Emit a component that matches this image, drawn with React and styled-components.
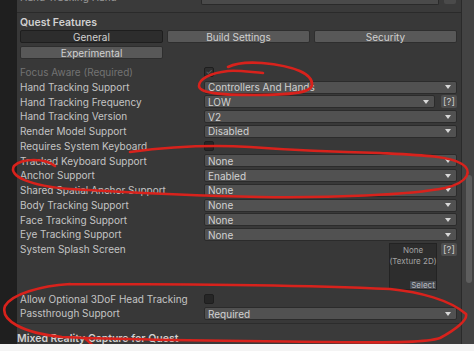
import React from 'react';
import styled, { createGlobalStyle } from 'styled-components';

const GlobalStyle = createGlobalStyle`
  *, *::before, *::after {
    box-sizing: border-box;
  }
  html, body {
    margin: 0;
    padding: 0;
    background: #f4f4f4;
  }
  body {
    font-family: Inter, "Noto Sans", "Liberation Sans", sans-serif;
    font-size: 10px;
  }
`;

const rows = [
  { label: 'Focus Aware (Required)', type: 'check', checked: true, disabled: true },
  { label: 'Hand Tracking Support', type: 'select', value: 'Controllers And Hands' },
  { label: 'Hand Tracking Frequency', type: 'select', value: 'LOW', help: true },
  { label: 'Hand Tracking Version', type: 'select', value: 'V2' },
  { label: 'Render Model Support', type: 'select', value: 'Disabled' },
  { label: 'Requires System Keyboard', type: 'check' },
  { label: 'Tracked Keyboard Support', type: 'select', value: 'None' },
  { label: 'Anchor Support', type: 'select', value: 'Enabled' },
  { label: 'Shared Spatial Anchor Support', type: 'select', value: 'None' },
  { label: 'Body Tracking Support', type: 'select', value: 'None' },
  { label: 'Face Tracking Support', type: 'select', value: 'None' },
  { label: 'Eye Tracking Support', type: 'select', value: 'None' },
  { label: 'System Splash Screen', type: 'texture' },
  { label: 'Allow Optional 3DoF Head Tracking', type: 'check' },
  { label: 'Passthrough Support', type: 'select', value: 'Required' }
];

const Field = ({ row }) => {
  if (row.type === 'check') {
    return (
      <Cell>
        <CheckBox $disabled={row.disabled}>{row.checked ? '✓' : ''}</CheckBox>
      </Cell>
    );
  }
  if (row.type === 'texture') {
    return (
      <TextureCell>
        <TextureBox>
          <TextureText>None<br />(Texture 2D)</TextureText>
          <SelectButton>Select</SelectButton>
        </TextureBox>
        <HelpButton>[?]</HelpButton>
      </TextureCell>
    );
  }
  return (
    <Cell>
      <Dropdown>
        <span>{row.value}</span>
        <Arrow />
      </Dropdown>
      {row.help && <HelpButton>[?]</HelpButton>}
    </Cell>
  );
};

const App = () => {
  return (
    <>
      <GlobalStyle />
      <Window>
        <Gutter />
        <Panel>
          <TopStrip>
            <TopLabel>Hand Tracking Hand</TopLabel>
            <TopField />
            <TopHelp />
          </TopStrip>
          <Header>Quest Features</Header>
          <Tabs>
            <Tab $active>General</Tab>
            <Tab>Build Settings</Tab>
            <Tab>Security</Tab>
            <Tab>Experimental</Tab>
          </Tabs>
          <Rows>
            {rows.map((row) => (
              <Row key={row.label} $tall={row.type === 'texture'}>
                <Label $disabled={row.disabled}>{row.label}</Label>
                <Field row={row} />
              </Row>
            ))}
          </Rows>
          <SectionTitle>Mixed Reality Capture for Quest</SectionTitle>
        </Panel>
        <Scrollbar>
          <Thumb />
        </Scrollbar>
        <Ink viewBox="0 0 474 351" width="474" height="351">
          <path d="M263,73 C250,72 238,70 228,71 C210,73 199,79 199,86 C199,93 220,95 255,95 C290,95 311,93 312,85 C313,74 295,66 262,63 C248,62 236,63 228,67" />
          <path d="M55,166 C45,158 22,158 14,166 C8,176 30,186 70,189 C120,192 200,196 260,197 C330,198 410,195 445,188 C470,182 472,170 462,164 C450,156 420,155 380,153 C330,152 290,150 250,147 C200,144 160,148 130,152" />
          <path d="M70,284 C40,286 12,294 5,306 C0,320 22,333 62,337 C120,340 250,341 330,342 C400,343 428,342 440,338 C455,330 468,320 466,314 C450,300 420,292 390,289 C300,285 150,284 70,284 M84,338 C90,342 94,346 97,351" />
        </Ink>
      </Window>
    </>
  );
};

const Window = styled.div`
  position: relative;
  width: 474px;
  height: 344px;
  display: flex;
  overflow: hidden;
  background: #383838;
`;

const Gutter = styled.div`
  width: 17px;
  flex-shrink: 0;
  background: #1f1f1f;
`;

const Panel = styled.div`
  flex: 1;
  display: flex;
  flex-direction: column;
  padding: 0 4px 0 3px;
  background: #383838;
  color: #c4c4c4;
`;

const TopStrip = styled.div`
  height: 13px;
  flex-shrink: 0;
  display: flex;
  align-items: flex-start;
  border-bottom: 1px solid #2a2a2a;
  margin: 0 -4px 0 -3px;
  padding: 0 5px 0 3px;
  background: #3a3a3a;
  overflow: hidden;
`;

const TopLabel = styled.div`
  width: 181px;
  height: 3px;
  color: #9a9a9a;
  line-height: 12px;
  white-space: nowrap;
  overflow: hidden;
  display: flex;
  align-items: flex-end;
`;

const TopField = styled.div`
  width: 238px;
  height: 5px;
  background: #4a4a4a;
  border: 1px solid #2a2a2a;
  border-top: none;
  border-radius: 0 0 2px 2px;
`;

const TopHelp = styled.div`
  width: 12px;
  height: 4px;
  margin-left: 5px;
  background: #4a4a4a;
  border-radius: 0 0 2px 2px;
`;

const Header = styled.div`
  height: 17px;
  flex-shrink: 0;
  display: flex;
  align-items: center;
  padding-top: 1px;
  font-weight: 600;
  font-size: 10.5px;
  color: #d0d0d0;
`;

const Tabs = styled.div`
  display: grid;
  grid-template-columns: repeat(3, 1fr);
  column-gap: 4px;
  row-gap: 3px;
  margin-bottom: 6px;
`;

const Tab = styled.div`
  height: 13px;
  display: flex;
  align-items: center;
  justify-content: center;
  border-radius: 2px;
  border: 1px solid ${(p) => (p.$active ? '#1e1e1e' : '#2e2e2e')};
  background: ${(p) => (p.$active ? '#2d2d2d' : '#585858')};
  color: ${(p) => (p.$active ? '#d2d2d2' : '#d0d0d0')};
  font-size: 10px;
`;

const Rows = styled.div`
  display: flex;
  flex-direction: column;
`;

const Row = styled.div`
  height: ${(p) => (p.$tall ? '49.5px' : '14.75px')};
  flex-shrink: 0;
  display: grid;
  grid-template-columns: 184px 1fr;
  align-items: ${(p) => (p.$tall ? 'start' : 'center')};
`;

const Label = styled.div`
  white-space: nowrap;
  color: ${(p) => (p.$disabled ? '#737373' : '#c4c4c4')};
  line-height: 14.75px;
`;

const Cell = styled.div`
  display: flex;
  align-items: center;
  gap: 6px;
`;

const TextureCell = styled.div`
  display: flex;
  justify-content: flex-end;
  align-items: flex-start;
  gap: 3px;
  padding-top: 1px;
`;

const CheckBox = styled.div`
  width: 10px;
  height: 10px;
  border-radius: 2px;
  border: 1px solid #1e1e1e;
  background: ${(p) => (p.$disabled ? '#2f2f2f' : '#262626')};
  color: #6a6a6a;
  font-size: 8px;
  line-height: 8px;
  text-align: center;
`;

const Dropdown = styled.div`
  flex: 1;
  height: 13px;
  display: flex;
  align-items: center;
  justify-content: space-between;
  padding: 0 5px 0 3px;
  border-radius: 2px;
  border: 1px solid #2b2b2b;
  background: #515151;
  color: #d2d2d2;
  font-size: 10px;
  white-space: nowrap;
`;

const Arrow = styled.span`
  width: 0;
  height: 0;
  border-left: 3px solid transparent;
  border-right: 3px solid transparent;
  border-top: 4px solid #d8d8d8;
`;

const HelpButton = styled.div`
  width: 16px;
  height: 13px;
  display: flex;
  align-items: center;
  justify-content: center;
  border-radius: 2px;
  background: #4e4e4e;
  color: #cfcfcf;
  font-size: 9.5px;
`;

const TextureBox = styled.div`
  width: 48px;
  height: 47px;
  display: flex;
  flex-direction: column;
  justify-content: space-between;
  align-items: center;
  border: 1px solid #232323;
  background: #2d2d2d;
  margin-right: 1px;
`;

const TextureText = styled.div`
  padding-top: 1px;
  text-align: center;
  font-size: 8px;
  line-height: 11px;
  white-space: nowrap;
  color: #a4a4a4;
`;

const SelectButton = styled.div`
  align-self: flex-end;
  width: 26px;
  height: 8px;
  display: flex;
  align-items: center;
  justify-content: center;
  background: #474a4f;
  color: #b8bcc2;
  font-size: 8px;
`;

const SectionTitle = styled.div`
  margin: 2px -4px 0 -3px;
  padding: 9px 0 0 0;
  border-top: 1px solid #2c2c2c;
  font-weight: 600;
  font-size: 10.5px;
  line-height: 12px;
  color: #d0d0d0;
  background: #3a3a3a;
  flex: 1;
`;

const Scrollbar = styled.div`
  width: 13px;
  flex-shrink: 0;
  border-left: 1px solid #2a2a2a;
  background: #434343;
  position: relative;
`;

const Thumb = styled.div`
  position: absolute;
  left: 4px;
  width: 6px;
  top: 175px;
  height: 108px;
  border-radius: 3px;
  background: #5e5e5e;
`;

const Ink = styled.svg`
  position: absolute;
  left: 0;
  top: 0;
  pointer-events: none;
  overflow: visible;

  path {
    fill: none;
    stroke: #d8221c;
    stroke-width: 2.6;
    stroke-linecap: round;
    stroke-linejoin: round;
  }
`;

export default App;
